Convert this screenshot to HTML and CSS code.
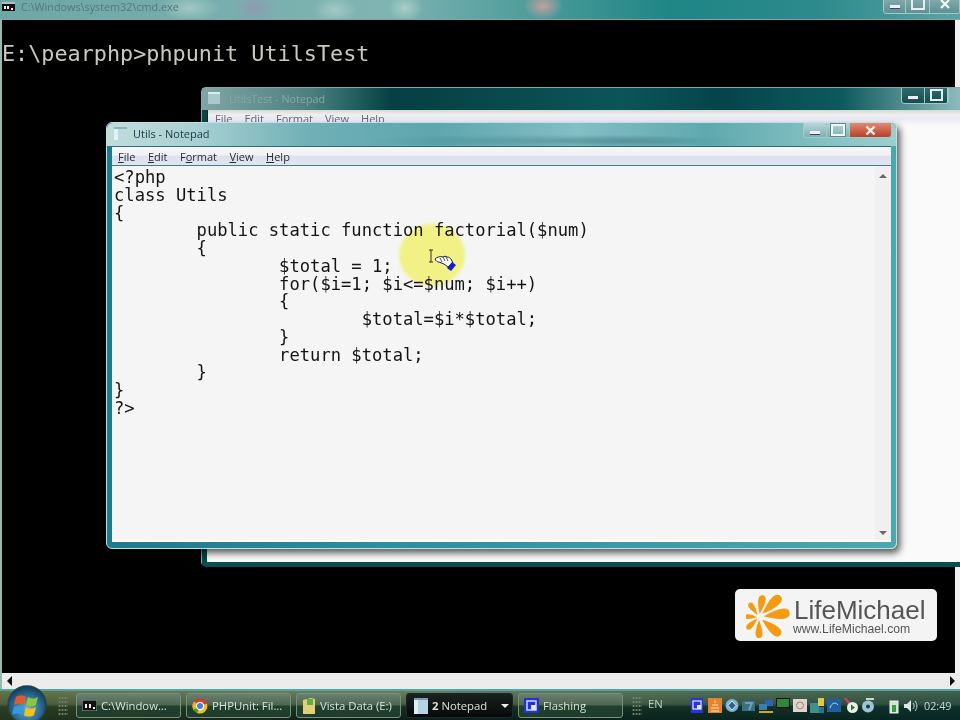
FILE: index.html
```html
<!doctype html>
<html lang="en">
<head>
  <meta charset="UTF-8">
  <title>Utils - Notepad</title>
  <link rel="stylesheet" href="styles.css">
</head>
<body>
<div class="screen">
  <div class="desktop">

    <div class="cmd">
      <div class="cmd-title">
        <svg class="cmd-icon" width="13" height="9" viewBox="0 0 13 9"><rect width="13" height="9" fill="#111"/><rect width="13" height="2" fill="#bbb"/><rect x="2" y="4" width="2" height="3" fill="#eee"/><rect x="5" y="4" width="2" height="3" fill="#eee"/><rect x="9" y="6" width="2" height="2" fill="#eee"/></svg>
        <span>C:\Windows\system32\cmd.exe</span>
        <div class="controls cmd-controls">
          <i class="ctl ctl-min"></i><i class="ctl ctl-max"></i>
          <i class="ctl ctl-x"><svg width="12" height="10" viewBox="0 0 12 10"><path d="M2 1l8 8M10 1l-8 8" stroke="#f4f4f4" stroke-width="2.2"/></svg></i>
        </div>
      </div>
      <div class="cmd-main">
        <div class="console">E:\pearphp&gt;phpunit UtilsTest</div>
        <div class="cmd-vbar"></div>
      </div>
      <div class="cmd-hbar">
        <span class="arrow-left"></span>
        <span class="arrow-right"></span>
      </div>
    </div>

    <div class="window back">
      <div class="back-title">
        <svg width="14" height="14" viewBox="0 0 14 14"><rect x="1" y="1" width="12" height="12" fill="#a9c9cc"/><rect x="1" y="1" width="12" height="2" fill="#dcecec"/></svg>
        <span>UtilsTest - Notepad</span>
        <div class="controls back-controls">
          <i class="ctl ctl-min"></i><i class="ctl ctl-max"></i>
        </div>
      </div>
      <div class="back-menu"><span>File</span><span>Edit</span><span>Format</span><span>View</span><span>Help</span></div>
      <div class="back-body"></div>
    </div>

    <div class="window front">
      <div class="front-title">
        <svg width="15" height="15" viewBox="0 0 15 15"><rect x="1" y="1" width="13" height="13" fill="#bcd9e2"/><rect x="1" y="1" width="4" height="13" fill="#e4f0f2"/><rect x="1" y="1" width="13" height="2" fill="#8fb4bf"/></svg>
        <span>Utils - Notepad</span>
        <div class="controls front-controls">
          <i class="ctl ctl-min"></i><i class="ctl ctl-max"></i>
          <i class="ctl ctl-x"><svg width="13" height="11" viewBox="0 0 13 11"><path d="M2.500 1.500l8 8M10.500 1.500l-8 8" stroke="#f6f0ec" stroke-width="2.400"/></svg></i>
        </div>
      </div>
      <div class="menu">
        <span><u>F</u>ile</span><span><u>E</u>dit</span><span>F<u>o</u>rmat</span><span><u>V</u>iew</span><span><u>H</u>elp</span>
      </div>
      <div class="editor">
        <div class="spot"></div>
<pre class="code">&lt;?php
class Utils
{
        public static function factorial($num)
        {
                $total = 1;
                for($i=1; $i&lt;=$num; $i++)
                {
                        $total=$i*$total;
                }
                return $total;
        }
}
?&gt;</pre>
        <svg class="pointer" width="32" height="28" viewBox="0 0 32 28">
          <path d="M2 5h4M4 5v12M2 17h4" stroke="#333" stroke-width="1" fill="none"/>
          <path d="M8 14c2-2 5-3 8-2 1-1 3-1 4 0 2 0 3 1 4 2l2 4-5 4-4-3-5-2c-2 0-3-1-4-3z" fill="#fff" stroke="#222" stroke-width="1"/>
          <path d="M13 13l2 4M16 12l2 4M19 12l2 4" stroke="#222" stroke-width=".8"/>
          <path d="M25 17l4 3-5 6-4-3z" fill="#1420c8"/>
        </svg>
        <div class="vbar"><span class="tri-up"></span><span class="tri-down"></span></div>
      </div>
    </div>

    <div class="logo">
      <svg class="flower" width="46" height="46" viewBox="0 0 46 46">
        <defs><path id="petal" d="M0 -1.500C-1.500 -5 -2.800 -10 0 -10C2.800 -10 1.500 -5 0 -1.500Z" fill="#f39c12"/></defs>
        <g transform="translate(13 22)">
          <use href="#petal" transform="rotate(10) scale(2.2)"/>
          <use href="#petal" transform="rotate(46) scale(3)"/>
          <use href="#petal" transform="rotate(82) scale(3.1)"/>
          <use href="#petal" transform="rotate(130) scale(2.8)"/>
          <use href="#petal" transform="rotate(180) scale(2.1)"/>
          <use href="#petal" transform="rotate(225) scale(1.7)"/>
          <use href="#petal" transform="rotate(272) scale(1.4)"/>
          <use href="#petal" transform="rotate(325) scale(1.7)"/>
        </g>
      </svg>
      <div class="logo-text">
        <div class="logo-name">LifeMichael</div>
        <div class="logo-url">www.LifeMichael.com</div>
      </div>
    </div>
  </div>

  <div class="taskbar">
    <svg class="orb" width="40" height="40" viewBox="0 0 40 40">
      <defs>
        <radialGradient id="orbfill" cx="50%" cy="60%" r="60%"><stop offset="0" stop-color="#5fb4d8"/><stop offset="1" stop-color="#0d3a5e"/></radialGradient>
      </defs>
      <circle cx="20" cy="20" r="19" fill="url(#orbfill)" stroke="#27414a" stroke-width="1.500"/>
      <path d="M9 12c3-2 7-2 10 0l-2 8c-3-2-6-2-10 0z" fill="#e2592a"/>
      <path d="M21 12c3 2 6 2 10 0l-2 8c-3 2-7 2-10 0z" fill="#8cc63f"/>
      <path d="M7 22c3-2 7-2 10 0l-2 8c-3-2-7-2-10 0z" fill="#3a9ad9"/>
      <path d="M19 22c3 2 6 2 10 0l-2 8c-3 2-7 2-10 0z" fill="#f4c01e"/>
    </svg>
    <div class="grip"></div>
    <div class="tasks">
      <div class="task">
        <svg width="15" height="11" viewBox="0 0 15 11"><rect width="15" height="11" fill="#111" stroke="#aaa"/><rect x="3" y="4" width="2" height="4" fill="#eee"/><rect x="7" y="4" width="2" height="4" fill="#eee"/><rect x="11" y="7" width="2" height="2" fill="#eee"/></svg>
        <span>C:\Window...</span>
      </div>
      <div class="task">
        <svg width="16" height="16" viewBox="0 0 16 16"><circle cx="8" cy="8" r="7.500" fill="#d9382c"/><path d="M8 8L1.500 12A7.500 7.500 0 0 1 2 3.500z" fill="#e8b71d"/><path d="M8 8L14.800 5.500A7.500 7.500 0 0 1 5 15z" fill="#e8c51d"/><path d="M8 8L5 15A7.500 7.500 0 0 1 1.500 12z" fill="#3f9d3c"/><circle cx="8" cy="8" r="3.600" fill="#4a7fd6" stroke="#fff" stroke-width="1.200"/></svg>
        <span>PHPUnit: Fil...</span>
      </div>
      <div class="task">
        <svg width="14" height="18" viewBox="0 0 14 18"><path d="M1 3l8-2 4 1v15H1z" fill="#e3cf78"/><path d="M5 2h6v6H5z" fill="#59b04a"/></svg>
        <span>Vista Data (E:)</span>
      </div>
      <div class="task task-active">
        <svg width="14" height="16" viewBox="0 0 14 16"><rect width="14" height="16" fill="#b4d4e4"/><rect width="4" height="16" fill="#dfeef4"/><rect width="14" height="2" fill="#7d9cac"/></svg>
        <span><b>2</b> Notepad</span>
        <span class="task-arrow"></span>
      </div>
      <div class="task">
        <svg width="15" height="15" viewBox="0 0 15 15"><rect width="15" height="15" fill="#2230d8"/><rect x="3" y="3" width="9" height="9" fill="none" stroke="#dfe4ff" stroke-width="1.400"/><rect x="7" y="7" width="5" height="5" fill="#dfe4ff"/></svg>
        <span>Flashing</span>
      </div>
    </div>
    <div class="grip grip-tray"></div>
    <div class="lang">EN</div>
    <div class="tray">
      <svg width="14" height="15" viewBox="0 0 14 15"><rect width="12" height="15" fill="#2a34d6"/><rect x="2" y="3" width="8" height="8" fill="none" stroke="#e4e8ff" stroke-width="1.200"/><rect x="6" y="7" width="4" height="4" fill="#e4e8ff"/></svg>
      <svg width="14" height="15" viewBox="0 0 14 15"><rect width="14" height="15" fill="#e88428"/><path d="M7 2v3M4 7h6M3 10h8M3 13h8" stroke="#fbe4c4"/></svg>
      <svg width="14" height="15" viewBox="0 0 14 15"><circle cx="7" cy="7.500" r="6.500" fill="#7fb2cf"/><path d="M7 3l4 4.500-4 4.500-4-4.500z" fill="#2a5f8a" stroke="#dcecf4"/></svg>
      <svg width="14" height="15" viewBox="0 0 14 15"><rect y="3" width="13" height="10" fill="#3a6f86"/><path d="M3 5h7l-3 7" stroke="#6fa0b4" fill="none" stroke-width="2"/></svg>
      <svg width="14" height="15" viewBox="0 0 14 15"><rect x="6" y="2" width="8" height="6" fill="#2c62b8"/><rect y="6" width="8" height="6" fill="#3c7fa8"/><path d="M0 14h14" stroke="#e0a020" stroke-width="2"/></svg>
      <svg width="14" height="15" viewBox="0 0 14 15"><rect width="14" height="10" fill="#111"/><rect x="1" y="1" width="12" height="8" fill="#2d8a3a"/><rect x="2" y="11" width="10" height="4" fill="#222"/></svg>
      <svg width="14" height="15" viewBox="0 0 14 15"><rect y="1" width="14" height="13" fill="#dcd6ce"/><circle cx="7" cy="7.500" r="3.500" fill="none" stroke="#b9736a"/></svg>
      <svg width="14" height="15" viewBox="0 0 14 15"><rect y="5" width="9" height="10" fill="#3f8f8c"/><rect x="8" width="6" height="8" fill="#e4c84a"/><rect x="9" y="9" width="5" height="6" fill="#2f6f98"/></svg>
      <svg width="14" height="15" viewBox="0 0 14 15"><rect y="1" width="14" height="13" fill="#1f5f9e"/><path d="M3 10c2-6 6-6 8-3" stroke="#a8d8ea" fill="none"/></svg>
      <svg width="14" height="15" viewBox="0 0 14 15"><path d="M1 0l5 6" stroke="#c8406a" stroke-width="2.500"/><circle cx="8.500" cy="9.500" r="5.500" fill="#ecece4"/><path d="M7 6.500l4 3-4 3z" fill="#1a7a30"/></svg>
      <svg width="14" height="15" viewBox="0 0 14 15"><circle cx="7" cy="8.500" r="6" fill="#9cc4d8"/><circle cx="7" cy="8.500" r="2" fill="#1d3a44"/><path d="M5 1h8" stroke="#d0d8c8" stroke-width="2"/></svg>
    </div>
    <div class="status">
      <svg width="13" height="16" viewBox="0 0 13 16"><rect x="3" y="3" width="8" height="12" fill="#cfe6cf" stroke="#eee"/><rect x="5" y="7" width="4" height="7" fill="#3e9a4a"/></svg>
      <svg width="15" height="14" viewBox="0 0 15 14"><path d="M1 5h3l4-4v12l-4-4H1z" fill="#dfe8e4"/><path d="M10 4c1.500 2 1.500 4 0 6M12 2c2.500 3 2.500 7 0 10" stroke="#cfd8d4" fill="none"/></svg>
    </div>
    <div class="clock">02:49</div>
  </div>
</div>
</body>
</html>
```
FILE: styles.css
```css
* {
  margin: 0;
  padding: 0;
  box-sizing: border-box;
}

body {
  background: #000;
}

.screen {
  width: 960px;
  height: 720px;
  display: flex;
  flex-direction: column;
  overflow: hidden;
  filter: blur(.5px);
  font-family: "Open Sans", "Noto Sans", sans-serif;
}

.desktop {
  position: relative;
  height: 689px;
}

/* console window */
.cmd {
  position: absolute;
  inset: 0;
  display: flex;
  flex-direction: column;
}

.cmd-title {
  height: 20px;
  display: flex;
  align-items: center;
  padding: 0 0 6px 2px;
  gap: 6px;
  font-size: 10.8px;
  color: #54787a;
  border-bottom: 1px solid #7fa8a6;
  background:
    radial-gradient(ellipse 22px 16px at 255px 8px, #8d9cb0 0, transparent 100%),
    radial-gradient(ellipse 22px 14px at 335px 10px, #a3c9c6 0, transparent 100%),
    radial-gradient(ellipse 18px 14px at 405px 8px, #a8cfc8 0, transparent 100%),
    radial-gradient(ellipse 20px 14px at 543px 6px, #c3a0a0 0, transparent 100%),
    radial-gradient(ellipse 30px 14px at 190px 8px, #a0c8c4 0, transparent 100%),
    linear-gradient(90deg, #6ea6a6 0, #7fb4b2 40%, #1f8585 70%, #2c8a8c 85%, #5aa3a5 100%);
}

.cmd-icon {
  flex: none;
}

.cmd-main {
  flex: 1;
  display: flex;
  border-left: 2px solid #9bb5b0;
}

.console {
  flex: 1;
  background: #000;
  color: #c9c9c0;
  font-family: "DejaVu Sans Mono", monospace;
  font-size: 21.8px;
  line-height: 26px;
  padding-top: 21px;
}

.cmd-vbar {
  width: 5px;
  background: #f0f0f0;
}

.cmd-hbar {
  height: 16px;
  flex: none;
  display: flex;
  justify-content: space-between;
  align-items: center;
  background: #ececec;
  border-left: 2px solid #9bb5b0;
  padding: 0 3px 0 5px;
}

.arrow-left {
  border: 5px solid transparent;
  border-right: 5px solid #111;
  border-left: 0;
}

.arrow-right {
  border: 5px solid transparent;
  border-left: 5px solid #111;
  border-right: 0;
  margin-right: 2px;
}

/* window buttons */
.controls {
  position: absolute;
  top: 0;
  display: flex;
  border: 1px solid #a5c8c8;
  border-top: 0;
  border-radius: 0 0 4px 4px;
  overflow: hidden;
}

.ctl {
  display: flex;
  align-items: center;
  justify-content: center;
  font-style: normal;
  border-right: 1px solid #a5c8c8;
  background: linear-gradient(#8fb4b6, #5d9193);
}

.ctl-min::after {
  content: "";
  width: 10px;
  height: 3px;
  margin-top: 5px;
  background: #eef;
  border-bottom: 1px solid #446;
}

.ctl-max::after {
  content: "";
  width: 10px;
  height: 8px;
  border: 2px solid #e6eef0;
}

.cmd-controls {
  right: -1px;
  top: -6px;
  height: 20px;
}

.cmd-controls .ctl-min {
  width: 22px;
}

.cmd-controls .ctl-min::after {
  margin-top: 7px;
}

.cmd-controls .ctl-max {
  width: 24px;
}

.cmd-controls .ctl-x {
  width: 30px;
}

/* notepad behind */
.window {
  position: absolute;
  display: flex;
  flex-direction: column;
}

.back {
  left: 201px;
  top: 87px;
  width: 759px;
  height: 480px;
  border: 1px solid #8fa5a3;
  border-right: 0;
  border-radius: 5px 0 0 5px;
  border-bottom: 5px solid #0b4e50;
  background: #06474a;
}

.back-title {
  position: relative;
  height: 22px;
  flex: none;
  display: flex;
  align-items: center;
  gap: 8px;
  padding: 0 0 2px 5px;
  font-size: 10.8px;
  color: #8aa6a4;
  background: linear-gradient(90deg, #7fa5a3 0, #4a7f7e 110px, #2e6a6a 140px, #053f42 190px, #0c5557 420px, #04444a 520px, #0e5a5c 640px, #8fbcbc 759px);
}

.back-controls {
  right: 11px;
  height: 16px;
}

.back-controls .ctl {
  width: 23px;
  background: linear-gradient(#2f6a6c, #154e50);
}

.back-controls .ctl-max::after {
  width: 9px;
  height: 8px;
  margin-bottom: 2px;
}

.back-menu {
  height: 20px;
  margin-left: 5px;
  flex: none;
  display: flex;
  gap: 12px;
  padding: 2px 0 0 7px;
  font-size: 11px;
  line-height: 14px;
  color: #667;
  background: linear-gradient(#d8d8d2 0, #f0f0f0 5px, #e9e9f5 8px, #fafafa 16px);
  border-left: 1px solid #222;
}

.back-body {
  flex: 1;
  margin-left: 5px;
  background: #fafafa;
}

/* notepad in front */
.front {
  left: 106px;
  top: 122px;
  width: 791px;
  height: 427px;
  padding: 0 5px 6px;
  border: 1px solid #bfe0e4;
  border-radius: 6px;
  background: linear-gradient(90deg, #1f7a8c 0, #2d8e9c 35%, #4aa8b0 100%);
  box-shadow: 3px 4px 7px rgba(0, 0, 0, .65);
}

.front-title {
  height: 23px;
  flex: none;
  display: flex;
  align-items: center;
  gap: 5px;
  margin: 0 -5px;
  padding: 0 0 3px 6px;
  font-size: 11px;
  color: #163a44;
  border-radius: 6px 6px 0 0;
  background:
    radial-gradient(ellipse 190px 7px at 450px 18px, rgba(35, 90, 105, .3) 0, transparent 100%),
    radial-gradient(ellipse 80px 6px at 520px 18px, rgba(35, 90, 105, .25) 0, transparent 100%),
    linear-gradient(90deg, #c3dcdc 0, #a8d0d2 90px, #70b0b6 200px, #5ea6ae 330px, #83bfc4 470px, #5fa9ae 600px, #9ccfd0 791px);
}

.front-controls {
  right: 4px;
  height: 15px;
}

.front-controls .ctl {
  background: linear-gradient(#b9d5d6, #7eb0b4);
}

.front-controls .ctl-min,
.front-controls .ctl-max {
  width: 23px;
}

.front-controls .ctl-max::after {
  width: 10px;
  height: 8px;
  border-color: #f2f6f6;
  box-shadow: 0 0 0 1px #5f8890;
}

.front-controls .ctl-x {
  width: 41px;
  background: linear-gradient(#e28a6e, #b8402a);
  border-right: 0;
}

.menu {
  height: 20px;
  flex: none;
  display: flex;
  align-items: center;
  padding-left: 6px;
  gap: 12.500px;
  font-size: 11px;
  color: #2b2b2b;
  border-top: 1px solid #2a6c7a;
  border-bottom: 1px solid #3f7f8c;
  background: linear-gradient(#f6f6f6 0, #f2f2f5 45%, #dde0ee 50%, #e2e4f0 100%);
}

.editor {
  position: relative;
  flex: 1;
  display: flex;
  justify-content: space-between;
  background: #f5f5f5;
  border-bottom: 2px solid #fff;
}

.spot {
  position: absolute;
  left: 287px;
  top: 58px;
  width: 66px;
  height: 62px;
  border-radius: 50%;
  background: #f1f185;
  filter: blur(1.500px);
}

.code {
  position: relative;
  padding: 3px 0 0 2px;
  font-family: "DejaVu Sans Mono", monospace;
  font-size: 17.150px;
  line-height: 17.750px;
  tab-size: 8;
  color: #141414;
}

.pointer {
  position: absolute;
  left: 315px;
  top: 79px;
}

.vbar {
  width: 16px;
  display: flex;
  flex-direction: column;
  justify-content: space-between;
  align-items: center;
  padding: 8px 0 5px;
  background: #f0f0f0;
}

.tri-up {
  border: 4px solid transparent;
  border-bottom: 4px solid #666;
  border-top: 0;
}

.tri-down {
  border: 4px solid transparent;
  border-top: 4px solid #666;
  border-bottom: 0;
}

/* watermark */
.logo {
  position: absolute;
  left: 735px;
  top: 589px;
  width: 202px;
  height: 52px;
  display: flex;
  border-radius: 5px;
  background: #f4f4f4;
}

.flower {
  flex: none;
  margin: 6px 0 0 11px;
}

.logo-text {
  color: #555;
  font-family: "Liberation Sans", Arial, sans-serif;
  margin-left: 2px;
}

.logo-name {
  font-size: 26px;
  line-height: 28px;
  margin-top: 7px;
}

.logo-url {
  font-size: 12.200px;
  line-height: 12px;
  margin: -1px 0 0 -1px;
}

/* taskbar */
.taskbar {
  position: relative;
  height: 31px;
  display: flex;
  align-items: center;
  border-top: 2px solid #4fa6a0;
  background:
    linear-gradient(90deg, rgba(80, 90, 40, .35) 0, transparent 40%, rgba(0, 50, 60, .4) 100%),
    linear-gradient(#6c7f5c 0, #4a5f44 45%, #17301f 55%, #0c1f16 100%);
  color: #d8e2dc;
  font-size: 11.300px;
}

.orb {
  position: absolute;
  left: 7px;
  top: -6px;
}

.grip {
  width: 10px;
  height: 20px;
  margin-left: 58px;
  background: radial-gradient(circle, #6e8068 1px, transparent 1.200px) 0 0 / 3px 4px;
}

.tasks {
  display: flex;
  gap: 5px;
  margin-left: 8px;
}

.task {
  position: relative;
  width: 105px;
  height: 25px;
  display: flex;
  align-items: center;
  gap: 4px;
  padding-left: 5px;
  border: 1px solid #75907c;
  border-radius: 3px;
  background: linear-gradient(#6b8070 0, #4d6650 48%, #20402c 52%, #203c2c 100%);
}

.task-active {
  width: 107px;
  padding-left: 7px;
  border-color: #223;
  background: linear-gradient(#1a211e, #050a08);
}

.task-arrow {
  position: absolute;
  right: 3px;
  top: 10px;
  border: 4px solid transparent;
  border-top: 4px solid #eee;
  border-bottom: 0;
}

.grip-tray {
  margin-left: 9px;
}

.lang {
  margin: -4px 0 0 6px;
  width: 43px;
  color: #bcd0cc;
}

.tray {
  display: flex;
  gap: 3px;
}

.status {
  display: flex;
  align-items: center;
  gap: 3px;
  margin-left: 12px;
}

.clock {
  margin-left: 6px;
  font-size: 10.800px;
  color: #c8d6d2;
}
```
